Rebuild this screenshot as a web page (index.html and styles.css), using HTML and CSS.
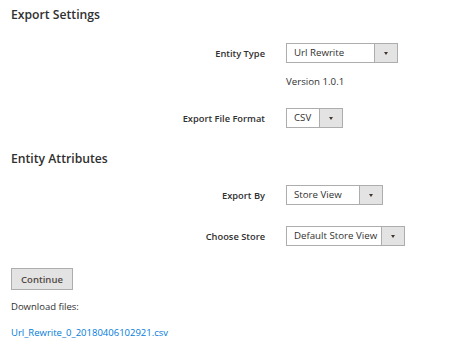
FILE: index.html
```html
<!DOCTYPE html>
<html>
<head>
<meta charset="utf-8">
<link rel="stylesheet" href="styles.css">
</head>
<body>
<div class="page">
  <h2 class="title">Export Settings</h2>
  <div class="field field-first">
    <div class="label">Entity Type</div>
    <div class="select w-entity"><span class="value">Url Rewrite</span><span class="arrow"></span></div>
  </div>
  <div class="note">Version 1.0.1</div>
  <div class="field field-format">
    <div class="label">Export File Format</div>
    <div class="select w-csv"><span class="value">CSV</span><span class="arrow"></span></div>
  </div>
  <h2 class="title title-attr">Entity Attributes</h2>
  <div class="field field-by">
    <div class="label">Export By</div>
    <div class="select w-by"><span class="value">Store View</span><span class="arrow"></span></div>
  </div>
  <div class="field field-store">
    <div class="label">Choose Store</div>
    <div class="select w-store"><span class="value">Default Store View</span><span class="arrow"></span></div>
  </div>
  <button class="btn">Continue</button>
  <div class="dl">Download files:</div>
  <a class="link" href="#">Url_Rewrite_0_20180406102921.csv</a>
</div>
</body>
</html>
```
FILE: styles.css
```css
html, body {
  margin: 0;
  padding: 0;
  background: #ffffff;
}
.page {
  padding: 6px 0 0 11px;
  font-family: "Open Sans", "Liberation Sans", sans-serif;
  color: #303030;
  display: flex;
  flex-direction: column;
  align-items: flex-start;
}
.title {
  margin: 0;
  font-size: 12.2px;
  font-weight: 600;
  line-height: 18px;
  height: 18px;
  color: #303030;
}
.field {
  display: flex;
  align-items: center;
  height: 20px;
}
.field-first { margin-top: 19px; }
.field-format { margin-top: 19px; }
.field-by { margin-top: 17.5px; }
.field-store { margin-top: 21px; }
.title-attr { margin-top: 21.5px; }
.label {
  width: 275px;
  padding-right: 21px;
  box-sizing: border-box;
  flex: none;
  text-align: right;
  font-size: 9.3px;
  font-weight: 600;
  color: #303030;
}
.select {
  display: flex;
  height: 20px;
  box-sizing: border-box;
  border: 1px solid #adadad;
  background: #fff;
}
.value {
  flex: 1;
  min-width: 0;
  padding-left: 7px;
  font-size: 9.7px;
  line-height: 18px;
  white-space: nowrap;
  color: #303030;
}
.arrow {
  width: 22px;
  flex: none;
  background: #e3e3e3;
  border-left: 1px solid #adadad;
  position: relative;
}
.arrow::after {
  content: "";
  position: absolute;
  left: 50%;
  top: 50%;
  margin-left: -2px;
  margin-top: -1px;
  border-left: 2.5px solid transparent;
  border-right: 2.5px solid transparent;
  border-top: 3px solid #41362f;
}
.w-entity { width: 112px; }
.w-csv { width: 57px; }
.w-by { width: 97px; }
.w-store { width: 119px; }
.note {
  margin-top: 12px;
  margin-left: 275px;
  font-size: 9.7px;
  line-height: 14px;
  height: 14px;
  color: #303030;
}
.btn {
  margin-top: 22px;
  width: 62px;
  height: 22px;
  box-sizing: border-box;
  background: #e3e3e3;
  border: 1px solid #adadad;
  font-family: "Open Sans", "Liberation Sans", sans-serif;
  font-size: 9.5px;
  font-weight: 600;
  color: #514943;
  padding: 0;
}
.dl {
  margin-top: 10px;
  font-size: 9.5px;
  line-height: 14px;
  height: 14px;
  color: #303030;
}
.link {
  margin-top: 12px;
  font-size: 9.5px;
  line-height: 14px;
  color: #007bdb;
  text-decoration: none;
}
```
